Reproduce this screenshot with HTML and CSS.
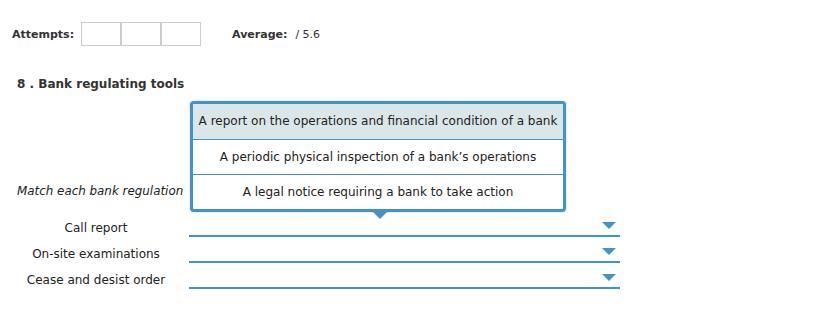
FILE: index.html
```html
<!DOCTYPE html>
<html>
<head>
<meta charset="utf-8">
<link rel="stylesheet" href="styles.css">
</head>
<body>
<div class="page">
  <div class="attempts-row">
    <span class="label-bold">Attempts:</span>
    <div class="attempt-boxes">
      <div class="attempt-box"></div>
      <div class="attempt-box"></div>
      <div class="attempt-box"></div>
    </div>
    <span class="label-bold avg-label">Average:</span>
    <span class="avg-value">/ 5.6</span>
  </div>

  <h2 class="question-title">8 . Bank regulating tools</h2>

  <div class="match-area">
    <p class="prompt">Match each bank regulation</p>

    <div class="match-rows">
      <div class="match-row">
        <div class="term">Call report</div>
        <div class="drop"><span class="caret"></span></div>
      </div>
      <div class="match-row">
        <div class="term">On-site examinations</div>
        <div class="drop"><span class="caret"></span></div>
      </div>
      <div class="match-row">
        <div class="term">Cease and desist order</div>
        <div class="drop"><span class="caret"></span></div>
      </div>
    </div>

    <div class="popup">
      <div class="option option-active">A report on the operations and financial condition of a bank</div>
      <div class="option">A periodic physical inspection of a bank’s operations</div>
      <div class="option">A legal notice requiring a bank to take action</div>
      <span class="popup-arrow"></span>
    </div>
  </div>
</div>
</body>
</html>
```

FILE: styles.css
```css
html, body {
  margin: 0;
  padding: 0;
  background: #ffffff;
}

body {
  font-family: "DejaVu Sans", Verdana, sans-serif;
  font-size: 12px;
  color: #222222;
  width: 822px;
  height: 316px;
  overflow: hidden;
}

.page {
  padding-top: 22px;
}

.attempts-row {
  display: flex;
  align-items: center;
  height: 24px;
  padding-left: 12px;
}

.label-bold {
  font-weight: bold;
  font-size: 11px;
  color: #333333;
}

.attempt-boxes {
  display: flex;
  margin-left: 7px;
}

.attempt-box {
  width: 38px;
  height: 22px;
  border: 1px solid #cccccc;
}

.avg-label {
  margin-left: 31px;
}

.avg-value {
  margin-left: 8px;
  font-size: 11px;
  color: #333333;
}

.question-title {
  margin: 0;
  padding-left: 17px;
  margin-top: 30px;
  font-size: 12px;
  font-weight: bold;
  color: #333333;
  line-height: 16px;
}

.match-area {
  position: relative;
}

.prompt {
  margin: 0;
  padding-left: 17px;
  padding-top: 91px;
  font-style: italic;
  font-size: 11.9px;
  line-height: 16px;
  white-space: nowrap;
}

.match-rows {
  display: flex;
  flex-direction: column;
  margin-top: 12px;
}

.match-row {
  display: flex;
  align-items: flex-end;
  height: 26px;
}

.term {
  width: 192px;
  text-align: center;
  font-size: 12px;
  line-height: 16px;
  padding-bottom: 1px;
}

.drop {
  position: relative;
  width: 431px;
  margin-left: -3px;
  height: 16px;
  border-bottom: 2px solid #4392c8;
}

.caret {
  position: absolute;
  right: 4px;
  top: 3px;
  width: 0;
  height: 0;
  border-left: 7px solid transparent;
  border-right: 7px solid transparent;
  border-top: 7px solid #4392c8;
}

.popup {
  position: absolute;
  left: 190px;
  top: 9px;
  width: 370px;
  border: 3px solid #4392c8;
  border-radius: 4px;
  background: #ffffff;
  box-shadow: 0 0 2px rgba(67, 146, 200, 0.5);
}

.option {
  height: 34px;
  line-height: 34px;
  text-align: center;
  font-size: 12px;
  color: #222222;
  border-top: 1px solid #4392c8;
  white-space: nowrap;
}

.option:first-child {
  border-top: none;
  height: 35px;
}

.option-active {
  background: #dbe6e9;
}

.popup-arrow {
  position: absolute;
  left: 180px;
  bottom: -10px;
  width: 0;
  height: 0;
  border-left: 7px solid transparent;
  border-right: 7px solid transparent;
  border-top: 7px solid #4392c8;
}
```
